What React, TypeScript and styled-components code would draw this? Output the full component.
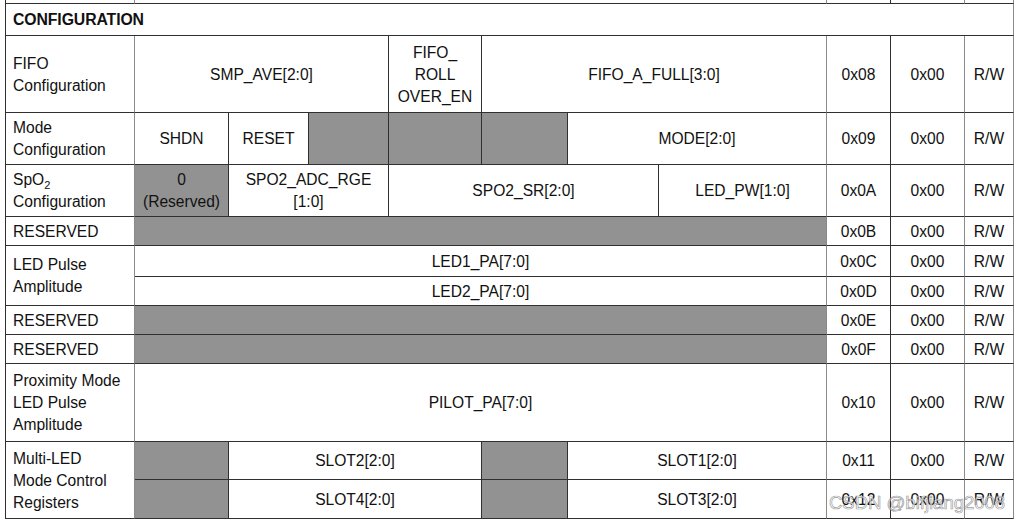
import React from 'react';
import styled, { createGlobalStyle } from 'styled-components';

const GlobalStyle = createGlobalStyle`
  html, body {
    margin: 0;
    padding: 0;
    background: #fff;
  }
  body {
    font-family: 'Liberation Sans', Arial, sans-serif;
    color: #111;
  }
`;

const DARK = '#303030';
const GRAY = '#8a8a8a';
const FILL = '#929292';

const Page = styled.div`
  position: relative;
  width: 1021px;
  height: 525px;
  overflow: hidden;
  padding-left: 5px;
  box-sizing: border-box;
`;

const Sheet = styled.div`
  display: grid;
  width: fit-content;
  grid-template-columns: 129px 94px 80px 80px 93px 86px 91px 84px 84px 64px 74px 49px;
  grid-template-rows: 4px 32px 77px 52px 52px 29px 31px 29px 29px 29px 78px 38px 39px;
  border-left: 1px solid ${DARK};
`;

const Cell = styled.div<{
  $span?: number;
  $rows?: number;
  $gray?: boolean;
  $left?: boolean;
  $edge?: 'gray' | 'dark';
}>`
  grid-column: span ${(p) => p.$span ?? 1};
  grid-row: span ${(p) => p.$rows ?? 1};
  display: flex;
  align-items: center;
  justify-content: ${(p) => (p.$left ? 'flex-start' : 'center')};
  text-align: ${(p) => (p.$left ? 'left' : 'center')};
  padding: ${(p) => (p.$left ? '1px 0 0 7px' : '1px 2px 0')};
  box-sizing: border-box;
  background: ${(p) => (p.$gray ? FILL : '#fff')};
  border-right: 1px solid ${(p) => (p.$edge === 'gray' ? GRAY : DARK)};
  border-bottom: 1px solid ${DARK};
  font-size: 15.6px;
  line-height: 22px;
  white-space: nowrap;
  overflow: hidden;
`;

const Title = styled.span`
  font-weight: bold;
  font-size: 15.8px;
  letter-spacing: -0.1px;
`;

const Text = styled.span`
  display: block;
`;

const Sub = styled.sub`
  font-size: 11px;
  line-height: 0;
  vertical-align: -4px;
`;

const Watermark = styled.div`
  position: absolute;
  left: 829px;
  top: 492px;
  font-family: 'Liberation Sans', Arial, sans-serif;
  font-size: 18.5px;
  line-height: 22px;
  color: rgba(255, 255, 255, 0.75);
  -webkit-text-stroke: 0.7px rgba(120, 120, 120, 0.75);
  pointer-events: none;
  white-space: nowrap;
`;

type RegRow = { addr: string; por?: string; rw?: string };

const Tail: React.FC<RegRow> = ({ addr, por = '0x00', rw = 'R/W' }) => (
  <>
    <Cell>{addr}</Cell>
    <Cell $edge='gray'>{por}</Cell>
    <Cell $edge='gray'>{rw}</Cell>
  </>
);

const Label: React.FC<{ lines: React.ReactNode[]; rows?: number }> = ({ lines, rows }) => (
  <Cell $left $edge='gray' $rows={rows}>
    <Text>
      {lines.map((l, i) => (
        <Text key={i}>{l}</Text>
      ))}
    </Text>
  </Cell>
);

const App: React.FC = () => {
  return (
    <Page>
      <GlobalStyle />
      <Sheet>
        {/* tail of the table above */}
        <Cell $edge='gray' />
        <Cell $span={8} $edge='gray' />
        <Cell />
        <Cell $edge='gray' />
        <Cell $edge='gray' />

        <Cell $span={12} $left $edge='gray'>
          <Title>CONFIGURATION</Title>
        </Cell>

        <Label lines={['FIFO', 'Configuration']} />
        <Cell $span={3}>SMP_AVE[2:0]</Cell>
        <Cell>
          <Text>
            <Text>FIFO_</Text>
            <Text>ROLL</Text>
            <Text>OVER_EN</Text>
          </Text>
        </Cell>
        <Cell $span={4} $edge='gray'>FIFO_A_FULL[3:0]</Cell>
        <Tail addr='0x08' />

        <Label lines={['Mode', 'Configuration']} />
        <Cell>SHDN</Cell>
        <Cell>RESET</Cell>
        <Cell $gray />
        <Cell $gray />
        <Cell $gray />
        <Cell $span={3} $edge='gray'>MODE[2:0]</Cell>
        <Tail addr='0x09' />

        <Label
          lines={[
            <>
              SpO<Sub>2</Sub>
            </>,
            'Configuration',
          ]}
        />
        <Cell $gray>
          <Text>
            <Text>0</Text>
            <Text>(Reserved)</Text>
          </Text>
        </Cell>
        <Cell $span={2}>
          <Text>
            <Text>SPO2_ADC_RGE</Text>
            <Text>[1:0]</Text>
          </Text>
        </Cell>
        <Cell $span={3}>SPO2_SR[2:0]</Cell>
        <Cell $span={2} $edge='gray'>LED_PW[1:0]</Cell>
        <Tail addr='0x0A' />

        <Label lines={['RESERVED']} />
        <Cell $span={8} $gray $edge='gray' />
        <Tail addr='0x0B' />

        <Label lines={['LED Pulse', 'Amplitude']} rows={2} />
        <Cell $span={8} $edge='gray'>LED1_PA[7:0]</Cell>
        <Tail addr='0x0C' />
        <Cell $span={8} $edge='gray'>LED2_PA[7:0]</Cell>
        <Tail addr='0x0D' />

        <Label lines={['RESERVED']} />
        <Cell $span={8} $gray $edge='gray' />
        <Tail addr='0x0E' />

        <Label lines={['RESERVED']} />
        <Cell $span={8} $gray $edge='gray' />
        <Tail addr='0x0F' />

        <Label lines={['Proximity Mode', 'LED Pulse', 'Amplitude']} />
        <Cell $span={8} $edge='gray'>PILOT_PA[7:0]</Cell>
        <Tail addr='0x10' />

        <Label lines={['Multi-LED', 'Mode Control', 'Registers']} rows={2} />
        <Cell $gray />
        <Cell $span={3}>SLOT2[2:0]</Cell>
        <Cell $gray />
        <Cell $span={3} $edge='gray'>SLOT1[2:0]</Cell>
        <Tail addr='0x11' />
        <Cell $gray />
        <Cell $span={3}>SLOT4[2:0]</Cell>
        <Cell $gray />
        <Cell $span={3} $edge='gray'>SLOT3[2:0]</Cell>
        <Tail addr='0x12' />
      </Sheet>
      <Watermark>CSDN @bifjiang2008</Watermark>
    </Page>
  );
};

export default App;
